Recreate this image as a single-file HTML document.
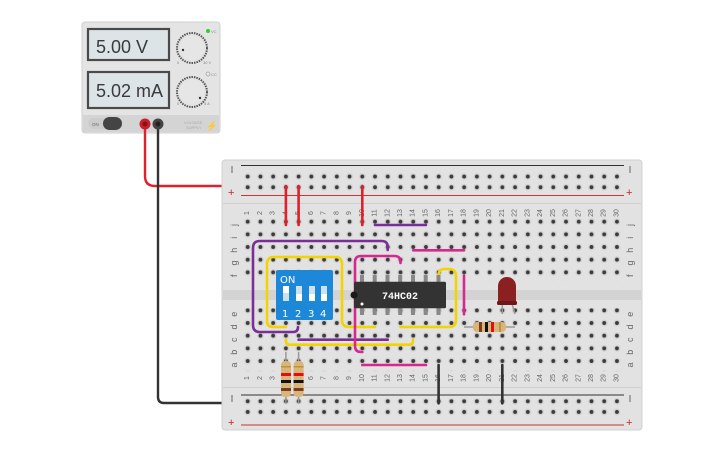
<!DOCTYPE html>
<html><head><meta charset="utf-8"><style>
html,body{margin:0;padding:0;background:#fff;width:725px;height:453px;overflow:hidden}
svg{display:block}
.n text{font-size:7px;fill:#666;text-anchor:middle;dominant-baseline:central}
.l text{font-size:9px;fill:#666;text-anchor:middle;dominant-baseline:central}
</style></head><body>
<svg width="725" height="453" viewBox="0 0 725 453" xmlns="http://www.w3.org/2000/svg" font-family="Liberation Sans, sans-serif">
<defs>
<pattern id="h" x="241.33" y="0" width="12.733" height="12.667" patternUnits="userSpaceOnUse">
<circle cx="6.37" cy="6.33" r="3.3" fill="#cfcfcf"/><circle cx="6.37" cy="6.33" r="1.9" fill="#3a3a3a"/>
</pattern>
<pattern id="hr" x="241.33" y="0" width="12.733" height="10.7" patternUnits="userSpaceOnUse">
<circle cx="6.37" cy="5.35" r="3.3" fill="#cfcfcf"/><circle cx="6.37" cy="5.35" r="1.9" fill="#3a3a3a"/>
</pattern>
</defs>

<!-- power supply -->
<rect x="82" y="22" width="138" height="111" rx="3" fill="#e4e4e4" stroke="#cfcfcf"/>
<rect x="83" y="115" width="136" height="17" fill="#d4d4d4"/>
<rect x="88" y="29" width="81" height="31" fill="#dce4e8" stroke="#4a4a4a" stroke-width="2.2"/>
<rect x="88" y="72" width="81" height="36" fill="#dce4e8" stroke="#4a4a4a" stroke-width="2.2"/>
<text x="96" y="53" font-size="18" fill="#3a3a3a">5.00 V</text>
<text x="96" y="97" font-size="18" fill="#3a3a3a">5.02 mA</text>
<circle cx="192" cy="48" r="15" fill="#e2e2e2" stroke="#555" stroke-width="2" stroke-dasharray="1.5 1"/>
<circle cx="192" cy="48" r="12.5" fill="#e6e6e6"/>
<circle cx="183" cy="50" r="1.2" fill="#333"/>
<circle cx="192" cy="92" r="15" fill="#e2e2e2" stroke="#555" stroke-width="2" stroke-dasharray="1.5 1"/>
<circle cx="192" cy="92" r="12.5" fill="#e6e6e6"/>
<circle cx="200" cy="98" r="1.2" fill="#333"/>
<circle cx="208" cy="31" r="2" fill="#3c3"/>
<circle cx="208" cy="74" r="2" fill="none" stroke="#aaa" stroke-width="0.8"/>
<text x="211" y="33" font-size="4" fill="#888">VC</text>
<text x="211" y="76" font-size="4" fill="#888">CC</text>
<text x="177" y="64" font-size="4" fill="#888">0</text><text x="203" y="64" font-size="4" fill="#888">30 V</text>
<text x="177" y="105" font-size="4" fill="#888">0</text><text x="204" y="105" font-size="4" fill="#888">5 A</text>
<rect x="88" y="118" width="34" height="11" rx="5.5" fill="#ccc"/>
<rect x="103" y="117" width="19" height="13" rx="6.5" fill="#444"/>
<text x="92" y="126" font-size="4.5" fill="#666">ON</text>
<text x="184" y="124" font-size="4" fill="#aaa">VOLTAGE</text>
<text x="186" y="129" font-size="4" fill="#aaa">SUPPLY</text>
<text x="206" y="129" font-size="9" fill="#bbb">⚡</text>

<!-- wires from supply -->
<path d="M145,124 V176 q0,10 10,10 H248" fill="none" stroke="#e0202a" stroke-width="2.4"/>
<path d="M158,124 V397 q0,6 6,6 H248" fill="none" stroke="#333" stroke-width="2.4"/>
<circle cx="145" cy="124" r="5.5" fill="#c8202a"/><circle cx="145" cy="124" r="2.5" fill="#8a1016"/>
<circle cx="158" cy="124" r="5.5" fill="#444"/><circle cx="158" cy="124" r="2.5" fill="#222"/>

<!-- breadboard -->
<rect x="222" y="160" width="420" height="270" rx="3" fill="#e2e2e2" stroke="#d0d0d0"/>
<rect x="223" y="203" width="418" height="1" fill="#cfcfcf"/>
<rect x="223" y="387" width="418" height="1" fill="#cfcfcf"/>
<rect x="223" y="290" width="418" height="10" fill="#d3d3d3"/>
<line x1="241" y1="165.5" x2="624" y2="165.5" stroke="#333" stroke-width="1"/>
<line x1="241" y1="195.5" x2="624" y2="195.5" stroke="#c33" stroke-width="1"/>
<line x1="241" y1="395" x2="624" y2="395" stroke="#333" stroke-width="1"/>
<line x1="241" y1="425" x2="624" y2="425" stroke="#c33" stroke-width="1"/>
<g stroke="#666" stroke-width="1"><line x1="232" y1="166" x2="232" y2="173"/><line x1="630" y1="166" x2="630" y2="173"/><line x1="232" y1="395" x2="232" y2="402"/><line x1="630" y1="395" x2="630" y2="402"/></g>
<text x="228" y="196" font-size="11" fill="#c22">+</text><text x="626" y="196" font-size="11" fill="#c22">+</text>
<text x="228" y="426" font-size="11" fill="#c22">+</text><text x="626" y="426" font-size="11" fill="#c22">+</text>

<rect x="241.33" y="169.65" width="382" height="21.4" fill="url(#hr)"/>
<rect x="241.33" y="397.95" width="382" height="21.4" fill="url(#hr)"/>
<rect x="241.33" y="218.67" width="382" height="63.3" fill="url(#h)"/>
<rect x="241.33" y="308" width="382" height="63.3" fill="url(#h)"/>

<g class="n">
<text transform="translate(247.7,213) rotate(-90)">1</text><text transform="translate(260.4,213) rotate(-90)">2</text><text transform="translate(273.2,213) rotate(-90)">3</text><text transform="translate(285.9,213) rotate(-90)">4</text><text transform="translate(298.6,213) rotate(-90)">5</text><text transform="translate(311.4,213) rotate(-90)">6</text><text transform="translate(324.1,213) rotate(-90)">7</text><text transform="translate(336.8,213) rotate(-90)">8</text><text transform="translate(349.6,213) rotate(-90)">9</text><text transform="translate(362.3,213) rotate(-90)">10</text><text transform="translate(375,213) rotate(-90)">11</text><text transform="translate(387.8,213) rotate(-90)">12</text><text transform="translate(400.5,213) rotate(-90)">13</text><text transform="translate(413.2,213) rotate(-90)">14</text><text transform="translate(426,213) rotate(-90)">15</text><text transform="translate(438.7,213) rotate(-90)">16</text><text transform="translate(451.4,213) rotate(-90)">17</text><text transform="translate(464.2,213) rotate(-90)">18</text><text transform="translate(476.9,213) rotate(-90)">19</text><text transform="translate(489.6,213) rotate(-90)">20</text><text transform="translate(502.4,213) rotate(-90)">21</text><text transform="translate(515.1,213) rotate(-90)">22</text><text transform="translate(527.8,213) rotate(-90)">23</text><text transform="translate(540.6,213) rotate(-90)">24</text><text transform="translate(553.3,213) rotate(-90)">25</text><text transform="translate(566,213) rotate(-90)">26</text><text transform="translate(578.8,213) rotate(-90)">27</text><text transform="translate(591.5,213) rotate(-90)">28</text><text transform="translate(604.2,213) rotate(-90)">29</text><text transform="translate(617,213) rotate(-90)">30</text>
</g>
<g class="n">
<text transform="translate(247.7,378) rotate(-90)">1</text><text transform="translate(260.4,378) rotate(-90)">2</text><text transform="translate(273.2,378) rotate(-90)">3</text><text transform="translate(285.9,378) rotate(-90)">4</text><text transform="translate(298.6,378) rotate(-90)">5</text><text transform="translate(311.4,378) rotate(-90)">6</text><text transform="translate(324.1,378) rotate(-90)">7</text><text transform="translate(336.8,378) rotate(-90)">8</text><text transform="translate(349.6,378) rotate(-90)">9</text><text transform="translate(362.3,378) rotate(-90)">10</text><text transform="translate(375,378) rotate(-90)">11</text><text transform="translate(387.8,378) rotate(-90)">12</text><text transform="translate(400.5,378) rotate(-90)">13</text><text transform="translate(413.2,378) rotate(-90)">14</text><text transform="translate(426,378) rotate(-90)">15</text><text transform="translate(438.7,378) rotate(-90)">16</text><text transform="translate(451.4,378) rotate(-90)">17</text><text transform="translate(464.2,378) rotate(-90)">18</text><text transform="translate(476.9,378) rotate(-90)">19</text><text transform="translate(489.6,378) rotate(-90)">20</text><text transform="translate(502.4,378) rotate(-90)">21</text><text transform="translate(515.1,378) rotate(-90)">22</text><text transform="translate(527.8,378) rotate(-90)">23</text><text transform="translate(540.6,378) rotate(-90)">24</text><text transform="translate(553.3,378) rotate(-90)">25</text><text transform="translate(566,378) rotate(-90)">26</text><text transform="translate(578.8,378) rotate(-90)">27</text><text transform="translate(591.5,378) rotate(-90)">28</text><text transform="translate(604.2,378) rotate(-90)">29</text><text transform="translate(617,378) rotate(-90)">30</text>
</g>
<g class="l">
<text transform="translate(234,225) rotate(-90)">j</text><text transform="translate(234,237.7) rotate(-90)">i</text><text transform="translate(234,250.3) rotate(-90)">h</text><text transform="translate(234,263) rotate(-90)">g</text><text transform="translate(234,275.7) rotate(-90)">f</text>
<text transform="translate(234,314.3) rotate(-90)">e</text><text transform="translate(234,327) rotate(-90)">d</text><text transform="translate(234,339.7) rotate(-90)">c</text><text transform="translate(234,352.3) rotate(-90)">b</text><text transform="translate(234,365) rotate(-90)">a</text>
<text transform="translate(630,225) rotate(-90)">j</text><text transform="translate(630,237.7) rotate(-90)">i</text><text transform="translate(630,250.3) rotate(-90)">h</text><text transform="translate(630,263) rotate(-90)">g</text><text transform="translate(630,275.7) rotate(-90)">f</text>
<text transform="translate(630,314.3) rotate(-90)">e</text><text transform="translate(630,327) rotate(-90)">d</text><text transform="translate(630,339.7) rotate(-90)">c</text><text transform="translate(630,352.3) rotate(-90)">b</text><text transform="translate(630,365) rotate(-90)">a</text>
</g>

<!-- wires on board -->
<g fill="none" stroke-width="2.6" stroke-linecap="round">
<path d="M285.9,186 V225 M298.6,186 V225 M362.3,186 V225" stroke="#e0202a"/>
<path d="M375,225 H425.9" stroke="#7b2d9a"/>
<path d="M413.2,250.3 H464" stroke="#d6288e"/>
<path d="M387.7,250 V247 q0,-6 -6,-6 H260 q-7,0 -7,7 V325 q0,7 7,7 H293 q5,0 5,-5" stroke="#7b2d9a"/>
<path d="M298.6,339.7 H387.7" stroke="#7b2d9a"/>
<path d="M285.9,327 H273 q-6,0 -6,-6 V264 q0,-7 7,-7 H335 q7,0 7,7 V320 q0,7 7,7 H375" stroke="#f3d400"/>
<path d="M285.9,339.7 v1 q0,4 4,4 H409 q4,0 4,-4 v-1" stroke="#f3d400"/>
<path d="M400.5,263 V262 q0,-6 -6,-6 H361 q-6,0 -6,6 V346 q0,6 6,6 H362.3" stroke="#d6288e"/>
<path d="M362.3,365 H426" stroke="#d6288e"/>
<path d="M464,275.7 V314.3" stroke="#d6288e"/>
<path d="M438.6,275.7 V275 q0,-6 6,-6 H449 q7,0 7,7 V320 q0,7 -7,7 H400.5" stroke="#f3d400"/>
<path d="M438.6,365 V403.3 M502.3,365 V403.3" stroke="#333"/>
</g>

<!-- DIP switch -->
<rect x="276" y="270" width="57" height="50" rx="2" fill="#1e88d8"/>
<text x="280" y="283" font-size="10" fill="#fff" font-family="DejaVu Sans, sans-serif">ON</text>
<g fill="#cfe0ee">
<rect x="283" y="286" width="6" height="15"/><rect x="296" y="286" width="6" height="15"/><rect x="309" y="286" width="6" height="15"/><rect x="321" y="286" width="6" height="15"/>
</g>
<g fill="#fff"><rect x="283" y="286" width="6" height="7"/><rect x="296" y="294" width="6" height="7"/><rect x="309" y="294" width="6" height="7"/><rect x="321" y="294" width="6" height="7"/></g>
<g font-size="10" fill="#fff" font-family="DejaVu Sans, sans-serif"><text x="282" y="317">1</text><text x="295" y="317">2</text><text x="308" y="317">3</text><text x="320" y="317">4</text></g>

<!-- chip -->
<g fill="#888">
<rect x="360" y="275" width="4" height="8"/><rect x="372.7" y="275" width="4" height="8"/><rect x="385.5" y="275" width="4" height="8"/><rect x="398.2" y="275" width="4" height="8"/><rect x="411" y="275" width="4" height="8"/><rect x="423.7" y="275" width="4" height="8"/><rect x="436.5" y="275" width="4" height="8"/>
<rect x="360" y="307" width="4" height="8"/><rect x="372.7" y="307" width="4" height="8"/><rect x="385.5" y="307" width="4" height="8"/><rect x="398.2" y="307" width="4" height="8"/><rect x="411" y="307" width="4" height="8"/><rect x="423.7" y="307" width="4" height="8"/><rect x="436.5" y="307" width="4" height="8"/>
</g>
<rect x="354" y="281.7" width="92" height="26.6" rx="1.5" fill="#333"/>
<circle cx="354" cy="295" r="3.5" fill="#1a1a1a"/>
<circle cx="362" cy="304" r="1.5" fill="#fff"/>
<text x="400" y="299" font-size="10" fill="#fff" text-anchor="middle" font-family="Liberation Mono, monospace" font-weight="bold">74HC02</text>

<!-- LED -->
<path d="M502.3,300 V314 M511,300 L515,314" stroke="#999" stroke-width="1.5"/>
<path d="M498,303 V286 a9,9 0 0 1 18,0 V303 Z" fill="#8b2020"/>
<rect x="497" y="301" width="20" height="4" rx="1.5" fill="#6d1818"/>

<!-- horizontal resistor -->
<path d="M464,327 H515" stroke="#999" stroke-width="1.5"/>
<rect x="473" y="322" width="33" height="10" rx="4" fill="#d9b57a"/>
<rect x="479" y="322" width="3" height="10" fill="#7a3e1e"/><rect x="485" y="322" width="3" height="10" fill="#111"/><rect x="491" y="322" width="3" height="10" fill="#e01010"/><rect x="499" y="322" width="2" height="10" fill="#b8963c"/>

<!-- vertical resistors -->
<path d="M285.9,352 V403 M298.6,352 V403" stroke="#999" stroke-width="1.5"/>
<rect x="281" y="361" width="10" height="36" rx="4" fill="#d9b57a"/>
<rect x="293.6" y="361" width="10" height="36" rx="4" fill="#d9b57a"/>
<g><rect x="281" y="366" width="10" height="1.5" fill="#b8963c"/><rect x="293.6" y="366" width="10" height="1.5" fill="#b8963c"/>
<rect x="281" y="373" width="10" height="3" fill="#e01010"/><rect x="293.6" y="373" width="10" height="3" fill="#e01010"/>
<rect x="281" y="380" width="10" height="3" fill="#111"/><rect x="293.6" y="380" width="10" height="3" fill="#111"/>
<rect x="281" y="388" width="10" height="3" fill="#7a3e1e"/><rect x="293.6" y="388" width="10" height="3" fill="#7a3e1e"/></g>
</svg>
</body></html>
